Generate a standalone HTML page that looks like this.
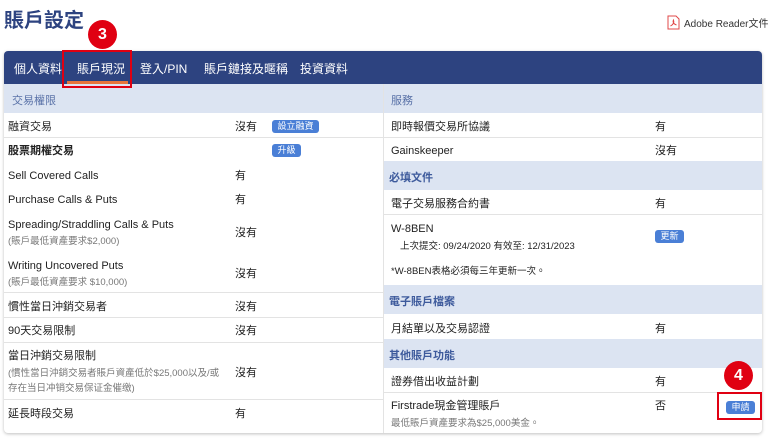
<!DOCTYPE html>
<html><head><meta charset="utf-8"><style>
*{margin:0;padding:0;box-sizing:border-box}
body{width:768px;height:439px;background:#fff;font-family:"Liberation Sans","Noto Sans CJK TC",sans-serif;position:relative;overflow:hidden;color:#222;font-size:11px}
.a{position:absolute;white-space:nowrap;line-height:14px;margin-top:2px}
.card{position:absolute;left:4px;top:51px;width:758px;height:382px;border-radius:4px;box-shadow:0 1px 3px rgba(0,0,0,.25);background:#fff;overflow:hidden}
.nav{position:absolute;left:0;top:0;width:758px;height:33px;background:#2d4380}
.nav span{position:absolute;top:11px;color:#fff;font-size:12px;line-height:15px}
.hd{position:absolute;height:29px;background:#dce4f2}
.ln{position:absolute;height:1px;background:#e3e3e3}
.btn{position:absolute;background:#4a7fd6;color:#fff;font-size:9px;border-radius:3px;height:13px;line-height:13px;text-align:center}
.sub{color:#777;font-size:9.5px}
.h{color:#3d5a9c;font-size:11px}
.circ{position:absolute;width:29px;height:29px;border-radius:50%;background:#e00012;color:#fff;font-weight:bold;font-size:16px;text-align:center;line-height:29px}
.rect{position:absolute;border:2px solid #e00012}
</style></head><body>
<div class="a" style="left:4px;top:7px;font-size:20px;line-height:24px;font-weight:bold;color:#2d4380">賬戶設定</div>
<svg class="a" style="left:667px;top:13px" width="13" height="15" viewBox="0 0 13 15"><path d="M1 1h8l3 3v10H1z" fill="#fff" stroke="#e04848"/><path d="M3.5 11c2-1 4-3 3-6-1 2 0 4 3 5" fill="none" stroke="#e04848" stroke-width="1"/></svg>
<div class="a" style="left:684px;top:16px;font-size:10px;color:#333">Adobe Reader文件</div>
<div class="card">
<div class="nav">
<span style="left:10px">個人資料</span>
<span style="left:73px">賬戶現況</span>
<span style="left:136px">登入/PIN</span>
<span style="left:200px">賬戶鏈接及暱稱</span>
<span style="left:296px">投資資料</span>
<div style="position:absolute;left:63px;top:30px;width:61px;height:3px;background:#e8743b"></div>
</div>
<div style="position:absolute;left:379px;top:33px;width:1px;height:349px;background:#e3e3e3"></div>
<div class="hd" style="left:0;top:33px;width:379px"></div>
<div class="a h" style="left:8px;top:41px;color:#5a72a8">交易權限</div>
<div class="a" style="left:4px;top:67px">融資交易</div><div class="a" style="left:231px;top:67px">沒有</div><div class="btn" style="left:268px;top:69px;width:47px">設立融資</div>
<div class="ln" style="left:0;top:86px;width:379px"></div>
<div class="a" style="left:4px;top:91px;font-weight:bold">股票期權交易</div><div class="btn" style="left:268px;top:93px;width:29px">升級</div>
<div class="a" style="left:4px;top:116px">Sell Covered Calls</div><div class="a" style="left:231px;top:116px">有</div>
<div class="a" style="left:4px;top:140px">Purchase Calls &amp; Puts</div><div class="a" style="left:231px;top:140px">有</div>
<div class="a" style="left:4px;top:165px">Spreading/Straddling Calls &amp; Puts</div><div class="a sub" style="left:4px;top:182px">(賬戶最低資產要求$2,000)</div><div class="a" style="left:231px;top:173px">沒有</div>
<div class="a" style="left:4px;top:206px">Writing Uncovered Puts</div><div class="a sub" style="left:4px;top:223px">(賬戶最低資產要求 $10,000)</div><div class="a" style="left:231px;top:214px">沒有</div>
<div class="ln" style="left:0;top:241px;width:379px"></div>
<div class="a" style="left:4px;top:247px">慣性當日沖銷交易者</div><div class="a" style="left:231px;top:247px">沒有</div>
<div class="ln" style="left:0;top:266px;width:379px"></div>
<div class="a" style="left:4px;top:271px">90天交易限制</div><div class="a" style="left:231px;top:271px">沒有</div>
<div class="ln" style="left:0;top:291px;width:379px"></div>
<div class="a" style="left:4px;top:296px">當日沖銷交易限制</div><div class="a sub" style="left:4px;top:314px">(慣性當日沖銷交易者賬戶資產低於$25,000以及/或</div><div class="a sub" style="left:4px;top:329px">存在当日冲销交易保证金催缴)</div><div class="a" style="left:231px;top:313px">沒有</div>
<div class="ln" style="left:0;top:348px;width:379px"></div>
<div class="a" style="left:4px;top:354px">延長時段交易</div><div class="a" style="left:231px;top:354px">有</div>
<div class="hd" style="left:380px;top:33px;width:378px"></div>
<div class="a h" style="left:387px;top:41px;color:#5a72a8">服務</div>
<div class="a" style="left:387px;top:67px">即時報價交易所協議</div><div class="a" style="left:651px;top:67px">有</div>
<div class="ln" style="left:380px;top:86px;width:378px"></div>
<div class="a" style="left:387px;top:91px">Gainskeeper</div><div class="a" style="left:651px;top:91px">沒有</div>
<div class="hd" style="left:380px;top:110px;width:378px"></div>
<div class="a h" style="left:385px;top:118px;font-weight:bold">必填文件</div>
<div class="a" style="left:387px;top:144px">電子交易服務合約書</div><div class="a" style="left:651px;top:144px">有</div>
<div class="ln" style="left:380px;top:163px;width:378px"></div>
<div class="a" style="left:387px;top:169px">W-8BEN</div><div class="a" style="left:396px;top:187px;font-size:9.5px">上次提交: 09/24/2020 有效至: 12/31/2023</div><div class="btn" style="left:651px;top:179px;width:29px">更新</div>
<div class="a" style="left:387px;top:212px;font-size:9.5px">*W-8BEN表格必須每三年更新一次。</div>
<div class="hd" style="left:380px;top:234px;width:378px"></div>
<div class="a h" style="left:385px;top:242px;font-weight:bold">電子賬戶檔案</div>
<div class="a" style="left:387px;top:269px">月結單以及交易認證</div><div class="a" style="left:651px;top:269px">有</div>
<div class="hd" style="left:380px;top:288px;width:378px"></div>
<div class="a h" style="left:385px;top:296px;font-weight:bold">其他賬戶功能</div>
<div class="a" style="left:387px;top:322px">證券借出收益計劃</div><div class="a" style="left:651px;top:322px">有</div>
<div class="ln" style="left:380px;top:341px;width:378px"></div>
<div class="a" style="left:387px;top:346px">Firstrade現金管理賬戶</div><div class="a" style="left:651px;top:346px">否</div>
<div class="a sub" style="left:387px;top:364px">最低賬戶資產要求為$25,000美金。</div>
<div class="btn" style="left:722px;top:350px;width:29px">申請</div>
</div>
<div class="rect" style="left:62px;top:50px;width:70px;height:38px"></div>
<div class="circ" style="left:88px;top:20px">3</div>
<div class="rect" style="left:717px;top:392px;width:45px;height:28px"></div>
<div class="circ" style="left:724px;top:361px">4</div>
</body></html>
